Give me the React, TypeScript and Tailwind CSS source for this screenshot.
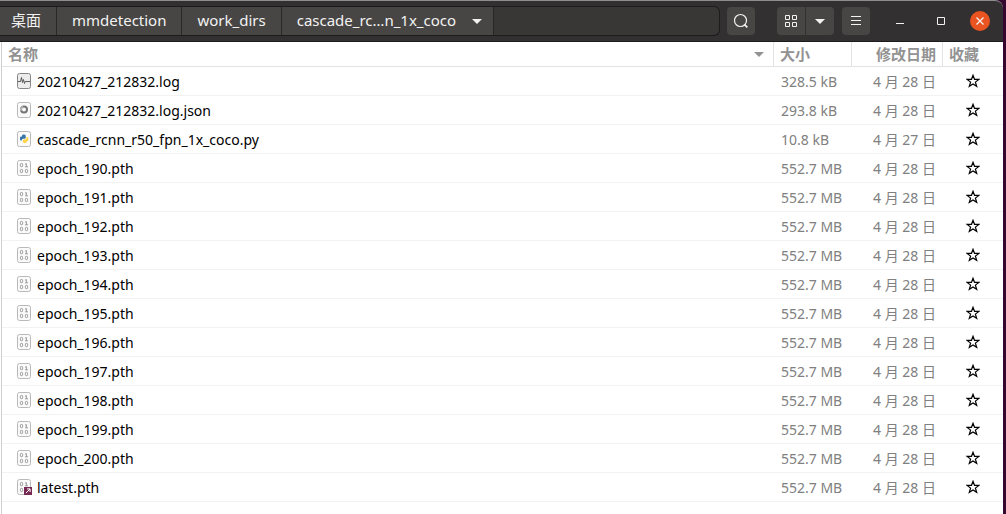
import { useState } from 'react';

type FileKind = 'log' | 'json' | 'python' | 'binary' | 'link';

type FileRow = {
  name: string;
  size: string;
  modified: string;
  kind: FileKind;
};

const CRUMBS = ['桌面', 'mmdetection', 'work_dirs'];

const EPOCHS = [190, 191, 192, 193, 194, 195, 196, 197, 198, 199, 200];

const FILES: FileRow[] = [
  { name: '20210427_212832.log', size: '328.5 kB', modified: '4 月 28 日', kind: 'log' },
  { name: '20210427_212832.log.json', size: '293.8 kB', modified: '4 月 28 日', kind: 'json' },
  { name: 'cascade_rcnn_r50_fpn_1x_coco.py', size: '10.8 kB', modified: '4 月 27 日', kind: 'python' },
  ...EPOCHS.map((n): FileRow => ({
    name: `epoch_${n}.pth`,
    size: '552.7 MB',
    modified: '4 月 28 日',
    kind: 'binary',
  })),
  { name: 'latest.pth', size: '552.7 MB', modified: '4 月 28 日', kind: 'link' },
];

export default function App() {
  return (
    <div className="flex min-h-screen bg-[#36082f] pr-[3px] font-['Noto_Sans','Noto_Sans_CJK_SC',sans-serif] text-sm">
      <div className="flex min-w-0 flex-1 flex-col">
        <HeaderBar />
        <FileTable />
      </div>
    </div>
  );
}

// ============================================================
// Header bar
// ============================================================
function HeaderBar() {
  const button = 'flex h-7 items-center justify-center bg-[#484644] text-[#f2f2f2] hover:bg-[#55534f]';

  return (
    <header className="flex h-[42px] items-center rounded-tr-lg border-t border-b border-t-[#8e8f8d] border-b-[#1d1c1c] bg-[#323030] pr-[13px]">
      <nav
        aria-label="Path"
        className="flex h-[30px] min-w-0 flex-1 overflow-hidden rounded-r-md border border-l-0 border-[#1d1c1c] bg-[#393735] text-[15px] text-[#f2f2f2]"
      >
        {CRUMBS.map((crumb) => (
          <button
            key={crumb}
            type="button"
            className="shrink-0 border-r border-[#2a2827] bg-[#484644] px-[15px] first:pl-[11px] hover:bg-[#55534f]"
          >
            {crumb}
          </button>
        ))}
        <button
          type="button"
          aria-current="page"
          className="flex shrink-0 items-center gap-4 border-r border-[#2a2827] bg-[#484644] pr-[11px] pl-[15px]"
        >
          cascade_rc…n_1x_coco
          <CaretIcon className="h-[5px] w-[10px]" />
        </button>
      </nav>

      <button type="button" aria-label="Search" className={`${button} ml-[7px] w-7 rounded`}>
        <SearchIcon className="size-4" />
      </button>

      <div className="ml-[22px] flex gap-px">
        <button type="button" aria-label="Grid view" className={`${button} w-7 rounded-l`}>
          <GridIcon className="size-3" />
        </button>
        <button type="button" aria-label="View options" className={`${button} w-7 rounded-r`}>
          <CaretIcon className="h-[5px] w-[10px]" />
        </button>
      </div>

      <button type="button" aria-label="Menu" className={`${button} ml-2 w-7 rounded`}>
        <MenuIcon className="size-[10px]" />
      </button>

      <div className="ml-[18px] flex items-center gap-[17px] text-[#f2f2f2]">
        <button type="button" aria-label="Minimize" className="flex size-6 items-center justify-center">
          <svg viewBox="0 0 8 8" fill="none" stroke="currentColor" className="size-2">
            <path d="M0 6.5h8" />
          </svg>
        </button>
        <button type="button" aria-label="Maximize" className="flex size-6 items-center justify-center">
          <svg viewBox="0 0 8 8" fill="none" stroke="currentColor" className="size-2">
            <path d="M.5.5h7v7h-7z" />
          </svg>
        </button>
        <button
          type="button"
          aria-label="Close"
          className="flex size-5 items-center justify-center rounded-full bg-[#e95420]"
        >
          <svg viewBox="0 0 8 8" fill="none" stroke="currentColor" strokeWidth="1.3" className="size-2">
            <path d="M.5.5l7 7M7.5.5l-7 7" />
          </svg>
        </button>
      </div>
    </header>
  );
}

// ============================================================
// File list
// ============================================================
function FileTable() {
  const [starred, setStarred] = useState<string[]>([]);

  const toggle = (name: string) =>
    setStarred((list) => (list.includes(name) ? list.filter((n) => n !== name) : [...list, name]));

  return (
    <main className="flex-1 bg-white pl-px">
      <div className="min-h-full border-l border-[#cfcfcf]">
        <table className="w-full table-fixed border-separate border-spacing-0">
          <colgroup>
            <col />
            <col className="w-[78px]" />
            <col className="w-[91px]" />
            <col className="w-[60px]" />
          </colgroup>
          <thead>
            <tr className="h-[25px] text-left text-[15px] leading-6 text-[#929292]">
              <th className="border-r border-b border-[#e3e3e3] p-0 pr-[9px] pl-1.5 font-bold">
                <button type="button" className="flex w-full items-center justify-between">
                  名称
                  <CaretIcon className="h-[5px] w-[10px]" />
                </button>
              </th>
              <th className="border-r border-b border-[#e3e3e3] p-0 pl-1.5 font-bold">大小</th>
              <th className="border-r border-b border-[#e3e3e3] p-0 pr-1.5 text-right font-bold">修改日期</th>
              <th className="border-b border-[#e3e3e3] p-0 pl-1.5 font-bold">收藏</th>
            </tr>
          </thead>
          <tbody>
            {FILES.map((file) => (
              <tr key={file.name} className="h-[29px] leading-5 text-[#808080]">
                <td className="border-b border-[#f2f2f2] p-0 pl-[15px]">
                  <div className="flex items-center gap-1.5 text-black">
                    <FileIcon kind={file.kind} />
                    <span className="pt-0.5">{file.name}</span>
                  </div>
                </td>
                <td className="border-b border-[#f2f2f2] p-0 pt-0.5 pl-[7px] whitespace-nowrap">{file.size}</td>
                <td className="border-b border-[#f2f2f2] p-0 pt-0.5 pr-[7px] text-right whitespace-nowrap">
                  {file.modified}
                </td>
                <td className="border-b border-[#f2f2f2] p-0">
                  <button
                    type="button"
                    aria-label={`Star ${file.name}`}
                    aria-pressed={starred.includes(file.name)}
                    onClick={() => toggle(file.name)}
                    className="mx-auto flex text-black"
                  >
                    <StarIcon className="size-[14px]" filled={starred.includes(file.name)} />
                  </button>
                </td>
              </tr>
            ))}
          </tbody>
        </table>
      </div>
    </main>
  );
}

// ============================================================
// Icons
// ============================================================
function FileIcon({ kind }: { kind: FileKind }) {
  const isLog = kind === 'log';

  return (
    <svg viewBox="0 0 14 16" fill="none" className="h-4 w-[14px] shrink-0 overflow-visible">
      <rect
        x=".5"
        y=".5"
        width="13"
        height="15"
        rx="2"
        fill={isLog ? '#ececec' : '#fafafa'}
        stroke={isLog ? '#858585' : '#b8b8b8'}
      />
      {isLog && <path d="M1 8.500h2.500l1-4 1 5 1-3 1 4 .8-2H13" stroke="#4c4c4c" strokeWidth=".9" />}
      {kind === 'json' && (
        <>
          <circle cx="7" cy="7.500" r="3" stroke="#757575" strokeWidth="2" />
          <path d="M4.200 8.600a3 3 0 0 1 1.800-3.900" stroke="#b5b5b5" strokeWidth="2" />
        </>
      )}
      {kind === 'python' && (
        <>
          <path
            d="M3 8.500V6.700Q3 5.500 4.300 5.500H5V4.800Q5 3.500 6.800 3.500T8.700 4.800V6.800Q8.700 7.800 7.600 7.800H6Q4.800 7.800 4.800 9.500H4Q3 9.500 3 8.500z"
            fill="#3775a9"
          />
          <path
            d="M11.300 6.800V9q0 1.200-1.500 1.200v.6q0 1.400-2 1.400t-2-1.400V9.500q0-1 1-1H8q1.500 0 1.500-2.500h.7q1.100 0 1.100.8z"
            fill="#ffd54a"
          />
        </>
      )}
      {(kind === 'binary' || kind === 'link') && (
        <g stroke="#929292" strokeWidth=".9">
          <rect x="3.400" y="3.500" width="2.200" height="3.200" rx=".8" />
          <path d="M8 4.200l1.400-.6v3.100M8 6.800h3" />
          <rect x="3.400" y="9.400" width="2.200" height="3.200" rx=".8" />
          <rect x="8.400" y="9.400" width="2.200" height="3.200" rx=".8" />
        </g>
      )}
      {kind === 'link' && (
        <>
          <path d="M7 8h8v8H7z" fill="#772953" />
          <path d="M9 14l4-4M10 9.900h3.100V13" stroke="#fff" />
        </>
      )}
    </svg>
  );
}

function CaretIcon({ className }: { className?: string }) {
  return (
    <svg viewBox="0 0 10 5" fill="currentColor" className={className}>
      <path d="M0 0h10L5 5z" />
    </svg>
  );
}

function SearchIcon({ className }: { className?: string }) {
  return (
    <svg viewBox="0 0 16 16" fill="none" stroke="currentColor" strokeWidth="1.200" className={className}>
      <circle cx="7.500" cy="7.500" r="6" />
      <path d="M11.300 11.300l3 3" strokeWidth="1.800" />
    </svg>
  );
}

function GridIcon({ className }: { className?: string }) {
  return (
    <svg viewBox="0 0 12 12" fill="none" stroke="currentColor" className={className}>
      <path d="M.5.5h4v4h-4zM7.500.5h4v4h-4zM.5 7.500h4v4h-4zM7.500 7.500h4v4h-4z" />
    </svg>
  );
}

function MenuIcon({ className }: { className?: string }) {
  return (
    <svg viewBox="0 0 10 10" fill="none" stroke="currentColor" className={className}>
      <path d="M0 .5h10M0 4.500h10M0 8.500h10" />
    </svg>
  );
}

function StarIcon({ className, filled }: { className?: string; filled: boolean }) {
  return (
    <svg
      viewBox="0 0 14 14"
      fill={filled ? 'currentColor' : 'none'}
      stroke="currentColor"
      strokeWidth="1.200"
      className={className}
    >
      <path d="M7 1.300l1.500 4 4.400.1-3.500 2.700 1.300 4.200L7 9.900l-3.700 2.400 1.300-4.200L1.100 5.400l4.400-.1z" />
    </svg>
  );
}
